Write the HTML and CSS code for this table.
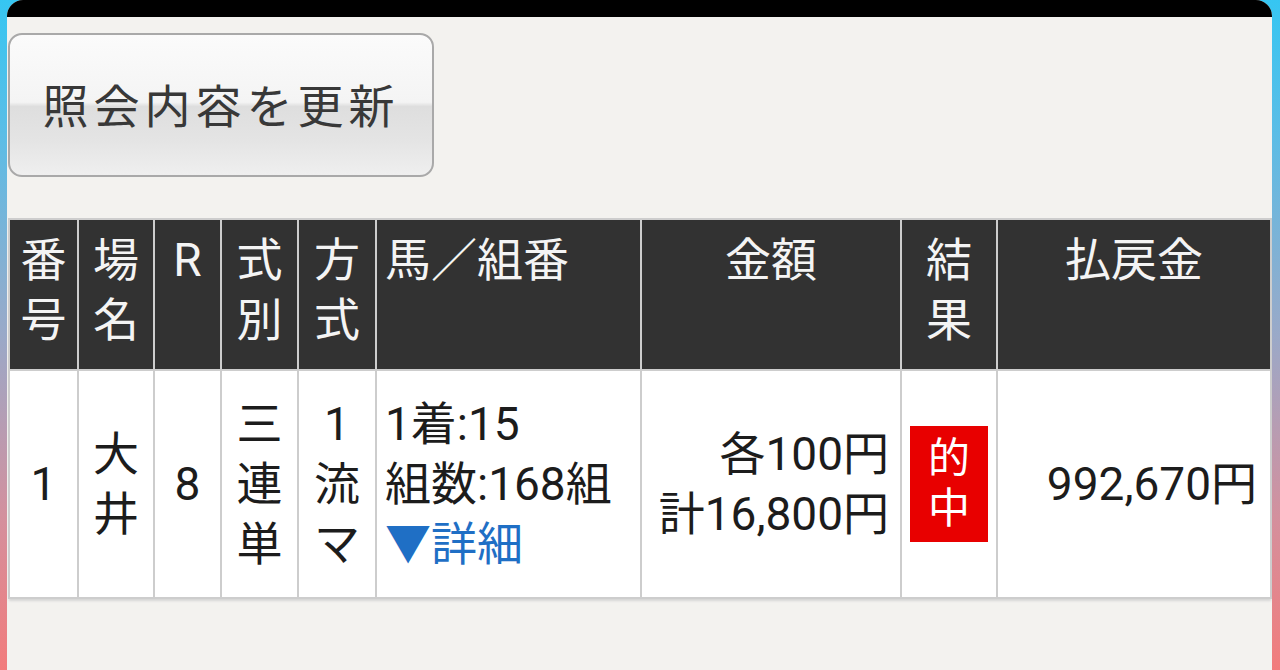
FILE: index.html
```html
<!DOCTYPE html>
<html lang="ja">
<head>
<meta charset="utf-8">
<title>照会</title>
<link rel="stylesheet" href="styles.css">
</head>
<body>
<div class="screen">
  <div class="statusbar"></div>
  <div class="content">
    <button class="refresh" type="button">照会内容を更新</button>
    <table class="bets">
      <colgroup>
        <col class="c-no"><col class="c-place"><col class="c-r"><col class="c-type"><col class="c-method">
        <col class="c-horse"><col class="c-amount"><col class="c-result"><col class="c-payout">
      </colgroup>
      <thead>
        <tr>
          <th>番号</th>
          <th>場名</th>
          <th>R</th>
          <th>式別</th>
          <th>方式</th>
          <th class="left">馬／組番</th>
          <th>金額</th>
          <th>結果</th>
          <th>払戻金</th>
        </tr>
      </thead>
      <tbody>
        <tr>
          <td>1</td>
          <td>大井</td>
          <td>8</td>
          <td>三連単</td>
          <td>1流マ</td>
          <td class="left">
            <div>1着:15</div>
            <div>組数:168組</div>
            <a class="detail" href="#">▼詳細</a>
          </td>
          <td class="right">
            <div>各100円</div>
            <div>計16,800円</div>
          </td>
          <td><span class="hit">的中</span></td>
          <td class="right payout">992,670円</td>
        </tr>
      </tbody>
    </table>
  </div>
</div>
</body>
</html>
```

FILE: styles.css
```css
html, body {
  margin: 0;
  padding: 0;
  height: 670px;
  overflow: hidden;
}

body {
  background: linear-gradient(to bottom, #36c6f2 0%, #5bbde6 20%, #9aa9c8 50%, #d58f9c 78%, #f27c7c 100%);
  font-family: Roboto, "Noto Sans CJK JP", sans-serif;
}

.screen {
  margin: 0 8px 0 7px;
  height: 670px;
  background: #f3f2ef;
  border-radius: 16px 16px 0 0;
  overflow: hidden;
}

.statusbar {
  height: 17px;
  background: #000;
}

.content {
  padding: 16px 2px 0 1px;
}

.refresh {
  display: block;
  width: 426px;
  height: 144px;
  margin: 0 0 41px 0;
  padding: 0 0 4px 0;
  border: 2px solid #a9a9a9;
  border-radius: 14px;
  background: linear-gradient(to bottom, #fbfbfb 0%, #f4f4f4 48%, #dedede 51%, #e4e4e4 75%, #efefef 100%);
  color: #383838;
  font-family: Roboto, "Noto Sans CJK JP", sans-serif;
  font-size: 46px;
  letter-spacing: 5px;
  text-align: center;
}

.bets {
  width: 1262px;
  table-layout: fixed;
  border-collapse: collapse;
  box-shadow: 0 3px 2px -1px #d6d6d6;
}

.c-no { width: 69px; }
.c-place { width: 76px; }
.c-r { width: 67px; }
.c-type { width: 77px; }
.c-method { width: 78px; }
.c-horse { width: 265px; }
.c-amount { width: 260px; }
.c-result { width: 96px; }
.c-payout { width: 274px; }

.bets th,
.bets td {
  border: 2px solid #cdcdcd;
  font-size: 46px;
  line-height: 60px;
  text-align: center;
  padding: 0;
}

.bets thead tr {
  height: 151px;
}

.bets th {
  background: #323232;
  color: #f4f4f4;
  font-weight: normal;
  vertical-align: top;
  padding: 10px 6px 0;
}

.bets tbody tr {
  height: 228px;
}

.bets td {
  background: #fff;
  color: #1c1c1c;
  vertical-align: middle;
  padding: 0 6px;
}

.bets .left {
  text-align: left;
  padding-left: 8px;
}

.bets .right {
  text-align: right;
  padding-right: 11px;
}

.bets td.payout {
  padding-right: 13px;
}

.detail {
  color: #1f6fc5;
  text-decoration: none;
}

.hit {
  display: inline-block;
  width: 78px;
  padding: 8px 0;
  background: #e80000;
  color: #fff;
  font-size: 42px;
  line-height: 50px;
  text-align: center;
  vertical-align: middle;
}
```
